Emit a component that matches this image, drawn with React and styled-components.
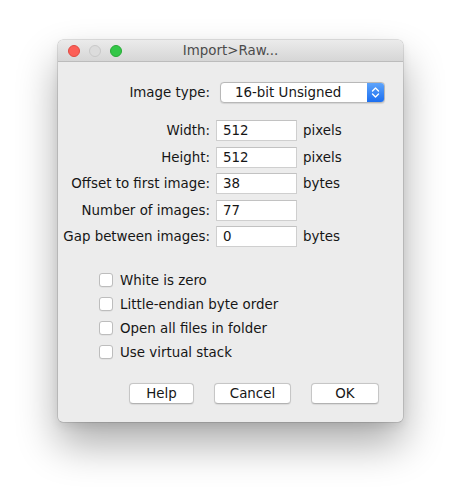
import React from 'react';
import styled, { createGlobalStyle } from 'styled-components';

const GlobalStyle = createGlobalStyle`
  html, body {
    margin: 0;
    background: #ffffff;
  }
  body {
    font-family: "DejaVu Sans", "Liberation Sans", sans-serif;
    font-size: 13.4px;
    color: #161616;
  }
`;

const Page = styled.div`
  min-height: 500px;
  box-sizing: border-box;
  padding: 40px 0 0 58px;
`;

const Window = styled.div`
  width: 345px;
  background: #ececec;
  border-radius: 5px;
  overflow: hidden;
  box-shadow: 0 0 0 0.5px rgba(0, 0, 0, 0.22), 0 22px 42px rgba(0, 0, 0, 0.33),
    0 4px 10px rgba(0, 0, 0, 0.08);
`;

const TitleBar = styled.div`
  height: 22px;
  display: grid;
  grid-template-columns: 1fr auto 1fr;
  align-items: center;
  background: linear-gradient(#ebebeb, #d6d6d6);
  border-bottom: 1px solid #bcbcbc;
  box-sizing: border-box;
`;

const Lights = styled.div`
  display: flex;
  gap: 9px;
  padding-left: 10px;
`;

const Light = styled.span`
  width: 12px;
  height: 12px;
  border-radius: 50%;
  box-sizing: border-box;
  background: ${p => p.$color};
  border: 0.5px solid ${p => p.$edge};
`;

const Title = styled.div`
  color: #4b4b4b;
`;

const Body = styled.div`
  padding: 20px 24px 18px 0;
  display: flex;
  flex-direction: column;
`;

const TypeRow = styled.div`
  display: flex;
  align-items: center;
`;

const Label = styled.div`
  flex: none;
  width: 152px;
  text-align: right;
  white-space: nowrap;
`;

const Select = styled.div`
  flex: none;
  margin-left: 10px;
  width: 165px;
  height: 21px;
  box-sizing: border-box;
  display: flex;
  background: #ffffff;
  border: 1px solid #b8b8b8;
  border-radius: 4px;
  box-shadow: 0 0.5px 1px rgba(0, 0, 0, 0.1);
  overflow: hidden;
`;

const SelectValue = styled.div`
  flex: 1;
  padding-left: 14px;
  line-height: 19px;
`;

const Stepper = styled.div`
  width: 17px;
  display: flex;
  align-items: center;
  justify-content: center;
  background: linear-gradient(#5ea4fb, #1c6ff0);
`;

const Fields = styled.div`
  margin-top: 17px;
  display: grid;
  grid-template-columns: 152px 81px auto;
  column-gap: 6px;
  row-gap: 5.5px;
  align-items: center;
`;

const Field = styled.input`
  height: 21px;
  width: 81px;
  box-sizing: border-box;
  margin: 0;
  padding: 0 6px;
  border: 1px solid #cfcfcf;
  border-top-color: #c2c2c2;
  background: #ffffff;
  font: inherit;
  color: #161616;
  outline: none;
`;

const Unit = styled.div``;

const Options = styled.div`
  margin-top: 21px;
  padding-left: 41px;
  display: flex;
  flex-direction: column;
`;

const Option = styled.label`
  height: 24px;
  display: flex;
  align-items: center;
  gap: 7px;
`;

const Box = styled.span`
  width: 14px;
  height: 14px;
  box-sizing: border-box;
  background: #ffffff;
  border: 1px solid #bdbdbd;
  border-radius: 3px;
  box-shadow: 0 0.5px 0.5px rgba(0, 0, 0, 0.08);
`;

const Buttons = styled.div`
  margin-top: 19px;
  display: flex;
  justify-content: flex-end;
  gap: 20px;
`;

const Button = styled.button`
  width: ${p => p.$width}px;
  height: 21px;
  margin: 0;
  padding: 0;
  box-sizing: border-box;
  background: #ffffff;
  border: 1px solid #c6c6c6;
  border-bottom-color: #b2b2b2;
  border-radius: 4px;
  box-shadow: 0 0.5px 1px rgba(0, 0, 0, 0.08);
  font: inherit;
  color: #161616;
`;

const fields = [
  { label: 'Width:', value: '512', unit: 'pixels' },
  { label: 'Height:', value: '512', unit: 'pixels' },
  { label: 'Offset to first image:', value: '38', unit: 'bytes' },
  { label: 'Number of images:', value: '77', unit: '' },
  { label: 'Gap between images:', value: '0', unit: 'bytes' },
];

const options = [
  'White is zero',
  'Little-endian byte order',
  'Open all files in folder',
  'Use virtual stack',
];

const Chevrons = () => (
  <svg width="9" height="13" viewBox="0 0 9 13">
    <path
      d="M1.5 5 L4.5 2 L7.5 5 M1.5 8 L4.5 11 L7.5 8"
      fill="none"
      stroke="#ffffff"
      strokeWidth="1.4"
      strokeLinecap="round"
      strokeLinejoin="round"
    />
  </svg>
);

export default function App() {
  return (
    <Page>
      <GlobalStyle />
      <Window>
        <TitleBar>
          <Lights>
            <Light $color="#fc5f57" $edge="#df4a41" />
            <Light $color="#dcdcdc" $edge="#c8c8c8" />
            <Light $color="#33c748" $edge="#27aa35" />
          </Lights>
          <Title>{'Import>Raw...'}</Title>
          <span />
        </TitleBar>
        <Body>
          <TypeRow>
            <Label>Image type:</Label>
            <Select>
              <SelectValue>16-bit Unsigned</SelectValue>
              <Stepper>
                <Chevrons />
              </Stepper>
            </Select>
          </TypeRow>
          <Fields>
            {fields.map(f => (
              <React.Fragment key={f.label}>
                <Label>{f.label}</Label>
                <Field defaultValue={f.value} readOnly />
                <Unit>{f.unit}</Unit>
              </React.Fragment>
            ))}
          </Fields>
          <Options>
            {options.map(o => (
              <Option key={o}>
                <Box />
                {o}
              </Option>
            ))}
          </Options>
          <Buttons>
            <Button $width={65}>Help</Button>
            <Button $width={77}>Cancel</Button>
            <Button $width={68}>OK</Button>
          </Buttons>
        </Body>
      </Window>
    </Page>
  );
}
